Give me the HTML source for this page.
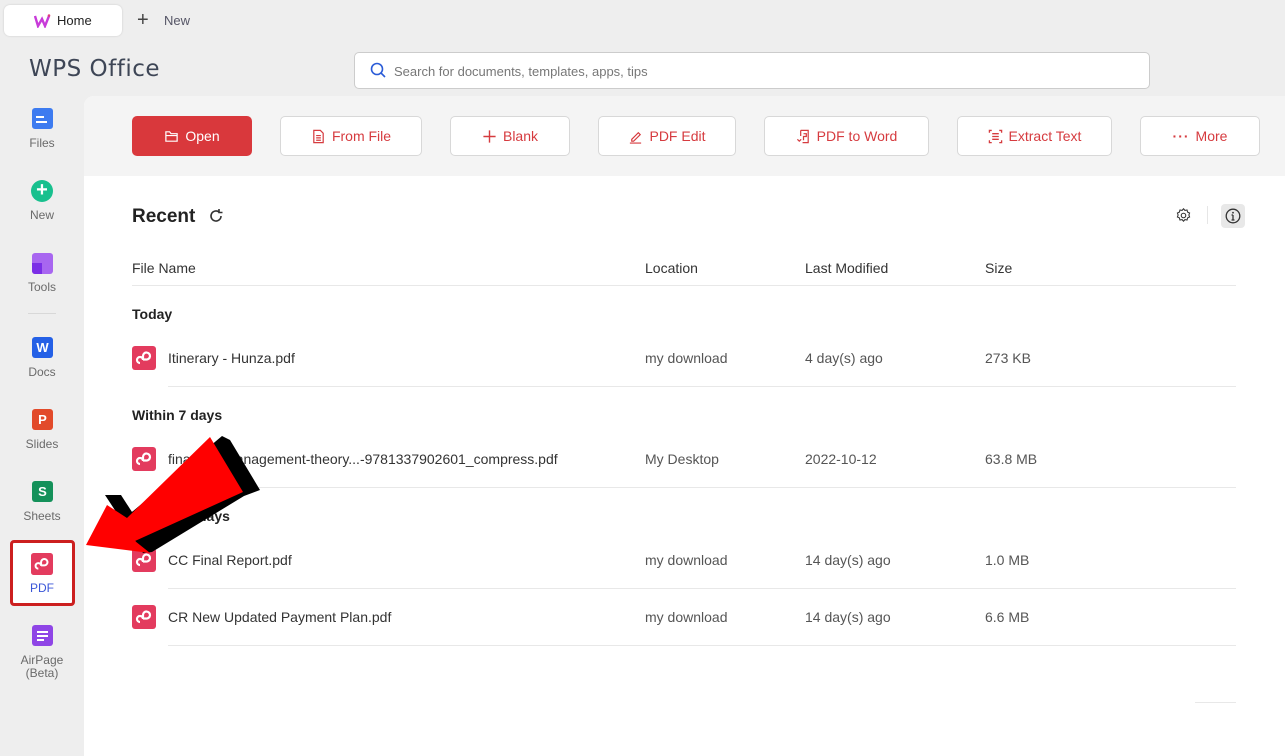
<!DOCTYPE html>
<html><head><meta charset="utf-8"><style>
*{margin:0;padding:0;box-sizing:border-box}
body{width:1285px;height:756px;overflow:hidden;background:#eeeeee;font-family:"Liberation Sans",sans-serif;position:relative;color:#222}
.a{position:absolute}
.tab{left:4px;top:5px;width:118px;height:31px;background:#fff;border-radius:6px;box-shadow:0 0 2px rgba(0,0,0,.15)}
.search{left:354px;top:52px;width:796px;height:37px;background:#fff;border:1px solid #ccc;border-radius:5px}
.main{left:84px;top:96px;width:1201px;height:660px;background:#fff;border-top-left-radius:10px;overflow:hidden}
.tb{left:0;top:0;width:1201px;height:80px;background:#f4f4f4}
.btn{position:absolute;top:20px;height:40px;background:#fff;border:1px solid #d8d8d8;border-radius:5px;color:#d63b3f;font-size:14px;display:flex;align-items:center;justify-content:center;gap:6px}
.btn svg{width:15px;height:15px}
.ic{left:32px;width:21px;height:21px;border-radius:3px}
.lab{left:0;width:84px;text-align:center;font-size:12px;color:#6a6a6a}
.t14{font-size:14px;color:#333}
.line{height:1px;background:#e8e8e8}
.pdf{left:132px;width:24px;height:24px}
</style></head><body>
<div class="a tab"></div>
<svg class="a" style="left:34px;top:14px" width="17" height="14" viewBox="0 0 17 14"><path d="M1 2 L4 12 L8 5 L11 12 L15 2" fill="none" stroke="#c83bd9" stroke-width="2.4"/><circle cx="15" cy="1.5" r="1.3" fill="#e0407a"/></svg>
<div class="a" style="left:57px;top:13px;font-size:13px;color:#222">Home</div>
<div class="a" style="left:137px;top:9px;font-size:20px;color:#444">+</div>
<div class="a" style="left:164px;top:13px;font-size:13px;color:#556">New</div>
<div class="a" style="left:29px;top:56px;font-size:23px;color:#3e4656;font-family:'DejaVu Sans',sans-serif;letter-spacing:0.5px">WPS Office</div>
<div class="a search"></div>
<svg class="a" style="left:370px;top:62px" width="16" height="16" viewBox="0 0 16 16"><circle cx="7" cy="7" r="5.5" fill="none" stroke="#2a5bd7" stroke-width="1.6"/><path d="M11 11 L15 15" stroke="#2a5bd7" stroke-width="1.6"/></svg>
<div class="a" style="left:394px;top:64px;font-size:13px;color:#777">Search for documents, templates, apps, tips</div>

<div class="a ic" style="top:108px;background:#3d7bf0"><div style="position:absolute;left:4px;top:8px;width:8px;height:2px;background:#fff"></div><div style="position:absolute;left:4px;top:13px;width:11px;height:2px;background:#fff"></div></div>
<div class="a lab" style="top:136px">Files</div>
<div class="a" style="left:31px;top:180px;width:22px;height:22px;border-radius:50%;background:#18c08e;color:#fff;font-size:20px;line-height:21px;text-align:center;font-weight:bold">+</div>
<div class="a lab" style="top:208px">New</div>
<div class="a ic" style="top:253px;background:#a866f0"><div style="position:absolute;left:0;top:10px;width:10px;height:11px;background:#7b2ee6;border-bottom-left-radius:3px"></div></div>
<div class="a lab" style="top:280px">Tools</div>
<div class="a" style="left:28px;top:313px;width:28px;height:1px;background:#d8d8d8"></div>
<div class="a ic" style="top:337px;background:#2460e6;color:#fff;font-weight:bold;font-size:13px;text-align:center;line-height:21px">W</div>
<div class="a lab" style="top:365px">Docs</div>
<div class="a ic" style="top:409px;background:#e24a2a;color:#fff;font-weight:bold;font-size:13px;text-align:center;line-height:21px">P</div>
<div class="a lab" style="top:437px">Slides</div>
<div class="a ic" style="top:481px;background:#14915a;color:#fff;font-weight:bold;font-size:13px;text-align:center;line-height:21px">S</div>
<div class="a lab" style="top:509px">Sheets</div>
<div class="a" style="left:10px;top:540px;width:65px;height:66px;border:3px solid #cc1f1f;border-radius:4px;background:#fff"></div>
<svg class="a" style="left:31px;top:553px" width="22" height="22" viewBox="0 0 24 24"><rect width="24" height="24" rx="3" fill="#e33b5e"/><path d="M8 17 A3 3 0 1 1 11 14 L11 10 A3.5 3.5 0 1 1 14 13.5 L11 13.5" fill="none" stroke="#fff" stroke-width="2.2"/></svg>
<div class="a lab" style="top:581px;color:#3a56d8">PDF</div>
<div class="a ic" style="top:625px;background:#8f45e6"><div style="position:absolute;left:5px;top:6px;width:11px;height:2px;background:#fff"></div><div style="position:absolute;left:5px;top:10px;width:11px;height:2px;background:#fff"></div><div style="position:absolute;left:5px;top:14px;width:7px;height:2px;background:#fff"></div></div>
<div class="a lab" style="top:654px;line-height:13px">AirPage<br>(Beta)</div>

<div class="a main">
<div class="a tb"></div>
<div class="btn" style="left:48px;width:120px;background:#d9383c;border-color:#d9383c;color:#fff"><svg viewBox="0 0 16 16"><path d="M2 3h4l1.5 2H14v8H2z M2 7h12" fill="none" stroke="#fff" stroke-width="1.3"/></svg>Open</div>
<div class="btn" style="left:196px;width:142px"><svg viewBox="0 0 16 16"><path d="M3 1.5h7l3 3v10H3z M5.5 7h5 M5.5 9.5h5 M5.5 12h5" fill="none" stroke="#d63b3f" stroke-width="1.3"/></svg>From File</div>
<div class="btn" style="left:366px;width:120px"><svg viewBox="0 0 16 16"><path d="M8 1.5v13 M1.5 8h13" stroke="#d63b3f" stroke-width="1.5"/></svg>Blank</div>
<div class="btn" style="left:514px;width:138px"><svg viewBox="0 0 16 16"><path d="M4 11l7-7 2 2-7 7H4z M2 15h12" fill="none" stroke="#d63b3f" stroke-width="1.3"/></svg>PDF Edit</div>
<div class="btn" style="left:680px;width:165px"><svg viewBox="0 0 16 16"><path d="M5 1.5h8v13H7 M5 1.5v6 M8 5h3v3H8v4 M1.5 11l2 2 2-2" fill="none" stroke="#d63b3f" stroke-width="1.3"/></svg>PDF to Word</div>
<div class="btn" style="left:873px;width:155px"><svg viewBox="0 0 16 16"><path d="M1.5 4V1.5H4 M12 1.5h2.5V4 M14.5 12v2.5H12 M4 14.5H1.5V12 M4.5 5h7 M4.5 8h7 M4.5 11h7" fill="none" stroke="#d63b3f" stroke-width="1.4"/></svg>Extract Text</div>
<div class="btn" style="left:1056px;width:120px"><span style="letter-spacing:1px;font-weight:bold">···</span>More</div>

<div class="a" style="left:48px;top:110px;font-size:19px;font-weight:bold;color:#222">Recent</div>
<svg class="a" style="left:124px;top:112px" width="16" height="16" viewBox="0 0 16 16"><path d="M13 8A5 5 0 1 1 11 4 M11 1v3.5H14.5" fill="none" stroke="#333" stroke-width="1.6"/></svg>
<svg class="a" style="left:1091px;top:111px" width="17" height="17" viewBox="0 0 24 24"><path d="M12 2.5l2 2.3 3-.6.8 3 2.8 1.3-1 2.8 1 2.8-2.8 1.3-.8 3-3-.6-2 2.3-2-2.3-3 .6-.8-3-2.8-1.3 1-2.8-1-2.8 2.8-1.3.8-3 3 .6z" fill="none" stroke="#333" stroke-width="1.5"/><circle cx="12" cy="12" r="3.2" fill="none" stroke="#333" stroke-width="1.5"/></svg>
<div class="a" style="left:1123px;top:110px;width:1px;height:18px;background:#e6e6e6"></div>
<div class="a" style="left:1137px;top:108px;width:24px;height:24px;background:#e8e8e8;border-radius:4px"></div>
<svg class="a" style="left:1141px;top:112px" width="16" height="16" viewBox="0 0 16 16"><circle cx="8" cy="8" r="6.8" fill="none" stroke="#333" stroke-width="1.3"/><path d="M8 7v5 M6.5 7H8 M6.5 12h3" stroke="#333" stroke-width="1.3"/><circle cx="8" cy="4.7" r=".9" fill="#333"/></svg>

<div class="a t14" style="left:48px;top:164px">File Name</div>
<div class="a t14" style="left:561px;top:164px">Location</div>
<div class="a t14" style="left:721px;top:164px">Last Modified</div>
<div class="a t14" style="left:901px;top:164px">Size</div>
<div class="a line" style="left:48px;top:189px;width:1104px"></div>
</div>

<div class="a" style="left:132px;top:306px;font-size:14px;font-weight:bold">Today</div>
<div class="a" style="left:132px;top:407px;font-size:14px;font-weight:bold">Within 7 days</div>
<div class="a" style="left:132px;top:508px;font-size:14px;font-weight:bold">Within 30 days</div>

<svg class="a pdf" style="top:346px" viewBox="0 0 24 24"><rect width="24" height="24" rx="3" fill="#e33b5e"/><path d="M8 17 A3 3 0 1 1 11 14 L11 10 A3.5 3.5 0 1 1 14 13.5 L11 13.5" fill="none" stroke="#fff" stroke-width="2.2"/></svg>
<svg class="a pdf" style="top:447px" viewBox="0 0 24 24"><rect width="24" height="24" rx="3" fill="#e33b5e"/><path d="M8 17 A3 3 0 1 1 11 14 L11 10 A3.5 3.5 0 1 1 14 13.5 L11 13.5" fill="none" stroke="#fff" stroke-width="2.2"/></svg>
<svg class="a pdf" style="top:548px" viewBox="0 0 24 24"><rect width="24" height="24" rx="3" fill="#e33b5e"/><path d="M8 17 A3 3 0 1 1 11 14 L11 10 A3.5 3.5 0 1 1 14 13.5 L11 13.5" fill="none" stroke="#fff" stroke-width="2.2"/></svg>
<svg class="a pdf" style="top:605px" viewBox="0 0 24 24"><rect width="24" height="24" rx="3" fill="#e33b5e"/><path d="M8 17 A3 3 0 1 1 11 14 L11 10 A3.5 3.5 0 1 1 14 13.5 L11 13.5" fill="none" stroke="#fff" stroke-width="2.2"/></svg>

<div class="a t14" style="left:168px;top:350px">Itinerary - Hunza.pdf</div>
<div class="a t14" style="left:645px;top:350px;color:#555">my download</div>
<div class="a t14" style="left:805px;top:350px;color:#555">4 day(s) ago</div>
<div class="a t14" style="left:985px;top:350px;color:#555">273 KB</div>
<div class="a line" style="left:168px;top:386px;width:1068px"></div>

<div class="a t14" style="left:168px;top:451px">financial-management-theory...-9781337902601_compress.pdf</div>
<div class="a t14" style="left:645px;top:451px;color:#555">My Desktop</div>
<div class="a t14" style="left:805px;top:451px;color:#555">2022-10-12</div>
<div class="a t14" style="left:985px;top:451px;color:#555">63.8 MB</div>
<div class="a line" style="left:168px;top:487px;width:1068px"></div>

<div class="a t14" style="left:168px;top:552px">CC Final Report.pdf</div>
<div class="a t14" style="left:645px;top:552px;color:#555">my download</div>
<div class="a t14" style="left:805px;top:552px;color:#555">14 day(s) ago</div>
<div class="a t14" style="left:985px;top:552px;color:#555">1.0 MB</div>
<div class="a line" style="left:168px;top:588px;width:1068px"></div>

<div class="a t14" style="left:168px;top:609px">CR New Updated Payment Plan.pdf</div>
<div class="a t14" style="left:645px;top:609px;color:#555">my download</div>
<div class="a t14" style="left:805px;top:609px;color:#555">14 day(s) ago</div>
<div class="a t14" style="left:985px;top:609px;color:#555">6.6 MB</div>
<div class="a line" style="left:168px;top:645px;width:1068px"></div>
<div class="a line" style="left:1195px;top:702px;width:41px"></div>

<svg class="a" style="left:0;top:0" width="1285" height="756" viewBox="0 0 1285 756">
<polygon points="105,495 121,495 132,512 222,436 230,440 260,490 244,496 152,552 143,553" fill="#000"/>
<polygon points="86,545 107,505 127,518 210,437 243,492 135,541 150,553" fill="#ff0000"/>
</svg>
</body></html>
